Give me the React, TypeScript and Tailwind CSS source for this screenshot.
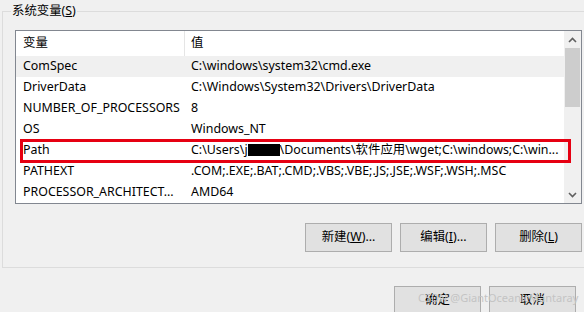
import React from "react";

const font = {
  fontFamily: '"Noto Sans", "Noto Sans CJK SC", sans-serif',
};

type Row = { name: string; value: React.ReactNode };

const rows: Row[] = [
  { name: "ComSpec", value: "C:\\windows\\system32\\cmd.exe" },
  { name: "DriverData", value: "C:\\Windows\\System32\\Drivers\\DriverData" },
  { name: "NUMBER_OF_PROCESSORS", value: "8" },
  { name: "OS", value: "Windows_NT" },
  {
    name: "Path",
    value: (
      <>
        C:\Users\j
        <span className="inline-block w-[32px] h-[12px] bg-black align-[-2px]" />
        \Documents\软件应用\wget;C:\windows;C:\win...
      </>
    ),
  },
  { name: "PATHEXT", value: ".COM;.EXE;.BAT;.CMD;.VBS;.VBE;.JS;.JSE;.WSF;.WSH;.MSC" },
  { name: "PROCESSOR_ARCHITECT...", value: "AMD64" },
];

function Chevron({ up }: { up?: boolean }) {
  return (
    <svg width="9" height="6" viewBox="0 0 9 6" className="text-[#606060]">
      <path
        d={up ? "M1 5 L4.5 1.5 L8 5" : "M1 1 L4.5 4.5 L8 1"}
        fill="none"
        stroke="currentColor"
        strokeWidth="1.6"
      />
    </svg>
  );
}

function Btn({ children }: { children: React.ReactNode }) {
  return (
    <div className="w-[87px] h-[29px] flex items-center justify-center bg-[#e1e1e1] border border-[#adadad] text-[12.4px] text-black">
      {children}
    </div>
  );
}

export default function App() {
  return (
    <div className="w-[584px] h-[312px] bg-[#f0f0f0] overflow-hidden relative" style={font}>
      {/* group box */}
      <div className="relative mt-[11px] ml-[2px] w-[640px] h-[257px] border border-[#dcdcdc]">
        <span className="absolute left-[8px] -top-[10px] px-[1px] bg-[#f0f0f0] text-[12.4px] leading-[18px] text-black">
          系统变量(<u>S</u>)
        </span>

        {/* list */}
        <div className="relative ml-[12px] mt-[18px] w-[567px] h-[174px] border border-[#828790] bg-white flex">
          <div className="flex-1 flex flex-col text-[12.4px] text-black">
            <div className="h-[25px] flex items-center">
              <div className="w-[169px] h-full flex items-center pl-[7px] border-r border-[#e5e5e5]">变量</div>
              <div className="pl-[6px]">值</div>
            </div>
            {rows.map((r, i) => (
              <div
                key={r.name}
                className={`h-[21px] flex items-center whitespace-nowrap ${i === 0 ? "bg-[#f0f0f0]" : ""}`}
              >
                <div className="w-[169px] pl-[7px] overflow-hidden">{r.name}</div>
                <div className="pl-[6px]">{r.value}</div>
              </div>
            ))}
          </div>

          {/* scrollbar */}
          <div className="w-[17px] bg-[#f0f0f0] flex flex-col items-center">
            <div className="h-[17px] flex items-center justify-center">
              <Chevron up />
            </div>
            <div className="w-[15px] h-[59px] bg-[#cdcdcd]" />
            <div className="flex-1" />
            <div className="h-[17px] flex items-center justify-center">
              <Chevron />
            </div>
          </div>

          {/* highlight */}
          <div className="absolute left-[4px] top-[108px] w-[551px] h-[24px] border-[3px] border-[#e60012]" />
        </div>

        <div className="ml-[12px] mt-[19px] w-[567px] flex justify-end gap-[8px]">
          <Btn>
            新建(<u>W</u>)...
          </Btn>
          <Btn>
            编辑(<u>I</u>)...
          </Btn>
          <Btn>
            删除(<u>L</u>)
          </Btn>
        </div>
      </div>

      {/* dialog buttons */}
      <div className="mt-[18px] w-[576px] flex justify-end gap-[8px]">
        <Btn>确定</Btn>
        <Btn>取消</Btn>
      </div>

      <span className="absolute left-[418px] top-[290px] text-[11px] text-[#c4c4c4] whitespace-nowrap">
        CSDN @GiantOceanicMantaray
      </span>
    </div>
  );
}
